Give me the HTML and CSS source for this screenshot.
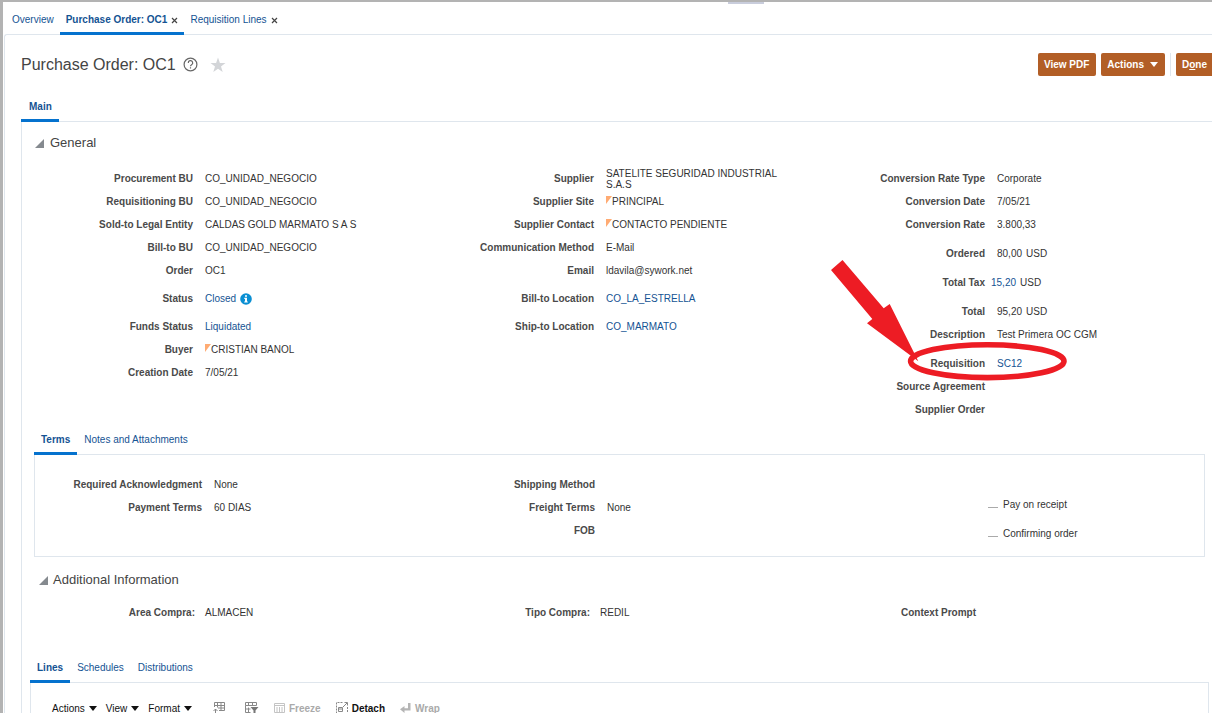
FILE: index.html
```html
<!DOCTYPE html>
<html lang="en">
<head>
    <meta charset="UTF-8">
    <meta name="viewport" content="width=device-width, initial-scale=1.0">
    <title>Purchase Order: OC1</title>
    <link rel="stylesheet" href="styles.css">
</head>
<body>

    <div class="splitter-handle"></div>

    <nav class="tabs top-tabs">
        <div class="tab"><a href="#overview">Overview</a></div>
        <div class="tab active">
            <a href="#order">Purchase Order: OC1</a>
            <button type="button" class="close" aria-label="Close Purchase Order">
                <svg width="7" height="8" viewBox="0 0 7 8"><path d="M1 2l5 5M6 2l-5 5"/></svg>
            </button>
        </div>
        <div class="tab">
            <a href="#requisition-lines">Requisition Lines</a>
            <button type="button" class="close" aria-label="Close Requisition Lines">
                <svg width="7" height="8" viewBox="0 0 7 8"><path d="M1 2l5 5M6 2l-5 5"/></svg>
            </button>
        </div>
    </nav>

    <main class="page">
        <header class="page-header">
            <h1>Purchase Order: OC1</h1>
            <button type="button" class="icon-button" aria-label="Help">
                <svg width="15" height="15" viewBox="0 0 15 15" fill="none" stroke="#666" stroke-width="1.2">
                    <circle cx="7.5" cy="7.5" r="6.4"/>
                    <path d="M5.3 6a2.2 2.2 0 1 1 3.3 1.7c-.8.5-1.1.8-1.1 1.6M7.5 10.3v1.3"/>
                </svg>
            </button>
            <button type="button" class="icon-button star" aria-label="Add to favorites">
                <svg width="16" height="16" viewBox="0 0 16 16">
                    <path d="M8 .5l1.9 5.4 5.6.1-4.5 3.5 1.7 5.5L8 11.7 3.3 15 5 9.5.5 6l5.6-.1z" fill="#d3d5d8"/>
                </svg>
            </button>
            <div class="page-actions">
                <button type="button" class="btn">View PDF</button>
                <button type="button" class="btn">Actions <span class="caret"></span></button>
                <span class="divider"></span>
                <button type="button" class="btn btn-edge"><span>D<u>o</u>ne</span></button>
            </div>
        </header>

        <nav class="tabs main-tabs">
            <div class="tab active"><a href="#main">Main</a></div>
        </nav>

        <div class="main-panel">
            <h2><span class="disclosure"></span>General</h2>

            <div class="columns general">
                <dl>
                    <div class="row"><dt>Procurement BU</dt><dd>CO_UNIDAD_NEGOCIO</dd></div>
                    <div class="row"><dt>Requisitioning BU</dt><dd>CO_UNIDAD_NEGOCIO</dd></div>
                    <div class="row"><dt>Sold-to Legal Entity</dt><dd>CALDAS GOLD MARMATO S A S</dd></div>
                    <div class="row"><dt>Bill-to BU</dt><dd>CO_UNIDAD_NEGOCIO</dd></div>
                    <div class="row"><dt>Order</dt><dd>OC1</dd></div>
                    <div class="row spaced">
                        <dt>Status</dt>
                        <dd class="with-icon">
                            <a href="#status">Closed</a>
                            <svg width="12" height="12" viewBox="0 0 12 12">
                                <circle cx="6" cy="6" r="5.8" fill="#0a8fd3"/>
                                <path d="M5 2.3h2v1.5H5zM4.3 4.8H7v3.6h.8v1.1H4.2V8.4H5V5.9h-.7z" fill="#fff"/>
                            </svg>
                        </dd>
                    </div>
                    <div class="row spaced"><dt>Funds Status</dt><dd><a href="#funds">Liquidated</a></dd></div>
                    <div class="row"><dt>Buyer</dt><dd class="contact">CRISTIAN BANOL</dd></div>
                    <div class="row"><dt>Creation Date</dt><dd>7/05/21</dd></div>
                </dl>

                <dl>
                    <div class="row"><dt>Supplier</dt><dd class="supplier">SATELITE SEGURIDAD INDUSTRIAL S.A.S</dd></div>
                    <div class="row"><dt>Supplier Site</dt><dd class="contact">PRINCIPAL</dd></div>
                    <div class="row"><dt>Supplier Contact</dt><dd class="contact">CONTACTO PENDIENTE</dd></div>
                    <div class="row"><dt>Communication Method</dt><dd>E-Mail</dd></div>
                    <div class="row"><dt>Email</dt><dd>ldavila@sywork.net</dd></div>
                    <div class="row spaced"><dt>Bill-to Location</dt><dd><a href="#bill-to">CO_LA_ESTRELLA</a></dd></div>
                    <div class="row spaced"><dt>Ship-to Location</dt><dd><a href="#ship-to">CO_MARMATO</a></dd></div>
                </dl>

                <dl class="amounts">
                    <div class="row"><dt>Conversion Rate Type</dt><dd>Corporate</dd></div>
                    <div class="row"><dt>Conversion Date</dt><dd>7/05/21</dd></div>
                    <div class="row"><dt>Conversion Rate</dt><dd>3.800,33</dd></div>
                    <div class="row spaced"><dt>Ordered</dt><dd class="money"><span>80,00</span><span>USD</span></dd></div>
                    <div class="row spaced tax"><dt>Total Tax</dt><dd class="money"><a href="#tax">15,20</a><span>USD</span></dd></div>
                    <div class="row spaced"><dt>Total</dt><dd class="money"><span>95,20</span><span>USD</span></dd></div>
                    <div class="row"><dt>Description</dt><dd>Test Primera OC CGM</dd></div>
                    <div class="row spaced marked">
                        <dt>Requisition</dt>
                        <dd><a href="#sc12">SC12</a></dd>
                        <!-- arrow and ring that point out the requisition -->
                        <svg class="callout" width="240" height="126" viewBox="0 0 240 126">
                            <path d="M1 13L12.5 3l41.2 48.3 6-4.3 28.6 57.3L37 66.3l5.3-4.3z" fill="#ed1c24"/>
                            <ellipse cx="157.3" cy="104.2" rx="76.7" ry="16.4" fill="none" stroke="#ed1c24" stroke-width="5.6"/>
                        </svg>
                    </div>
                    <div class="row"><dt>Source Agreement</dt><dd></dd></div>
                    <div class="row"><dt>Supplier Order</dt><dd></dd></div>
                </dl>
            </div>

            <section class="terms">
                <nav class="tabs">
                    <div class="tab active"><a href="#terms">Terms</a></div>
                    <div class="tab"><a href="#notes">Notes and Attachments</a></div>
                </nav>
                <div class="columns terms-panel">
                    <dl>
                        <div class="row"><dt>Required Acknowledgment</dt><dd>None</dd></div>
                        <div class="row"><dt>Payment Terms</dt><dd>60 DIAS</dd></div>
                    </dl>
                    <dl>
                        <div class="row"><dt>Shipping Method</dt><dd></dd></div>
                        <div class="row"><dt>Freight Terms</dt><dd>None</dd></div>
                        <div class="row"><dt>FOB</dt><dd></dd></div>
                    </dl>
                    <div class="checks">
                        <div class="check">
                            <input type="checkbox" id="pay_on_receipt" disabled>
                            <label for="pay_on_receipt">Pay on receipt</label>
                        </div>
                        <div class="check">
                            <input type="checkbox" id="confirming_order" disabled>
                            <label for="confirming_order">Confirming order</label>
                        </div>
                    </div>
                </div>
            </section>

            <h2 class="additional-title"><span class="disclosure"></span>Additional Information</h2>

            <div class="columns additional">
                <dl><div class="row"><dt>Area Compra:</dt><dd>ALMACEN</dd></div></dl>
                <dl><div class="row"><dt>Tipo Compra:</dt><dd>REDIL</dd></div></dl>
                <dl><div class="row"><dt>Context Prompt</dt><dd></dd></div></dl>
            </div>

            <section class="lines">
                <nav class="tabs">
                    <div class="tab active"><a href="#lines">Lines</a></div>
                    <div class="tab"><a href="#schedules">Schedules</a></div>
                    <div class="tab"><a href="#distributions">Distributions</a></div>
                </nav>
                <div class="toolbar">
                    <div class="menus">
                        <button type="button">Actions <span class="caret"></span></button>
                        <button type="button">View <span class="caret"></span></button>
                        <button type="button">Format <span class="caret"></span></button>
                    </div>
                    <button type="button" class="tool" aria-label="Export to Excel">
                        <svg width="12" height="12" viewBox="0 0 12 12" fill="none" stroke="#888">
                            <path d="M1.5 5V.5h10v8H6M1.5 3.5h10M4.5.5v5M8 .5v8M5 6h6.5M2.5 12V7M.5 9l2-2 2 2"/>
                        </svg>
                    </button>
                    <button type="button" class="tool filter" aria-label="Query by Example">
                        <svg width="14" height="12" viewBox="0 0 14 12" fill="none" stroke="#888">
                            <path d="M.5.5h11v3H.5zM3.5.5v3M7.5.5v3M.5 3.5v7h5M.5 7h5M3.5 5.5v5"/>
                            <path d="M5.500 5h8l-3 3.500V12L8.500 11V8.500z" fill="#777" stroke="none"/>
                        </svg>
                    </button>
                    <button type="button" class="tool" disabled>
                        <svg width="11" height="10" viewBox="0 0 11 10" fill="none" stroke="#c4c4c4">
                            <path d="M.5.5h10v9H.5zM.5 2.5h10M3 4v5M5.5 4v5M8 4v5"/>
                        </svg>
                        Freeze
                    </button>
                    <button type="button" class="tool">
                        <svg width="12" height="12" viewBox="0 0 12 12" fill="none" stroke="#888">
                            <path d="M.5 11.5V.5h7M11.5 5v6.5H.5" stroke-dasharray="2 1"/>
                            <path d="M2.5 5.5h4v4h-4zM2.5 7h4M7 5l4-4M8.5.5h3v3"/>
                        </svg>
                        Detach
                    </button>
                    <button type="button" class="tool" disabled>
                        <svg width="11" height="10" viewBox="0 0 11 10">
                            <path d="M8 0h2.500v7.5h-6V10L0 6.3 4.5 3v2.200H8z" fill="#b5b5b5"/>
                        </svg>
                        Wrap
                    </button>
                </div>
            </section>
        </div>
    </main>

</body>
</html>
```
FILE: styles.css
```css
* {
    box-sizing: border-box;
}
body {
    position: relative;
    height: 100vh;
    margin: 0;
    overflow: hidden;
    display: flex;
    flex-direction: column;
    border-top: 2px solid #b3b3b3;
    border-left: 3px solid #b3b3b3;
    background-color: #fff;
    color: #333;
    font-family: "Liberation Sans", Arial, sans-serif;
    font-size: 10px;
    line-height: 11px;
}
h1, h2, dl, dd {
    margin: 0;
}
a {
    color: #145393;
    text-decoration: none;
}
button {
    padding: 0;
    border: none;
    background: none;
    color: inherit;
    font: inherit;
    cursor: pointer;
}
svg {
    display: block;
    flex: none;
}

/* small grip in the top edge */
.splitter-handle {
    position: absolute;
    top: 0;
    left: 60%;
    width: 36px;
    height: 2px;
    background-color: #c9cddc;
}

/* tabs */
.tabs {
    display: flex;
    position: relative;
    margin-bottom: -1px;
}
.tab {
    display: flex;
    align-items: center;
    gap: 4px;
    height: 33px;
    padding: 5px 7px 0;
    border-bottom: 3px solid transparent;
}
.tab.active {
    border-bottom-color: #0572ce;
    font-weight: bold;
}
.close svg {
    stroke: #444;
    stroke-width: 1.2;
}
.top-tabs {
    padding-left: 3px;
}
.top-tabs .tab {
    padding-left: 6px;
    padding-right: 6px;
}

/* page header */
.page {
    flex: 1;
    display: flex;
    flex-direction: column;
    margin-left: 1px;
    border-top: 1px solid #dfe6ed;
    border-left: 1px solid #dfe6ed;
    border-top-left-radius: 3px;
    padding: 18px 0 0 16px;
}
.page-header {
    display: flex;
    align-items: center;
    margin-bottom: 13px;
}
h1 {
    font-size: 16px;
    line-height: 20px;
    font-weight: normal;
    color: #444;
}
.icon-button {
    margin-left: 7px;
}
.star {
    margin-left: 12px;
}
.page-actions {
    display: flex;
    gap: 5px;
    margin-left: auto;
}
.btn {
    display: flex;
    align-items: center;
    gap: 6px;
    height: 23px;
    padding: 0 7px 0 6px;
    border-radius: 2px;
    background-color: #b25e26;
    color: #fff;
    font-weight: bold;
}
.btn-edge {
    padding-right: 5px;
    border-radius: 2px 0 0 2px;
}
.caret {
    border: 4px solid transparent;
    border-top: 5px solid currentColor;
    border-bottom: none;
}
.divider {
    width: 1px;
    background-color: #dfe6ed;
}

/* main panel */
.main-tabs .tab {
    padding-left: 8px;
}
.main-panel {
    flex: 1;
    border-top: 1px solid #dfe6ed;
    border-left: 1px solid #dfe6ed;
    padding-top: 13px;
}
h2 {
    display: flex;
    align-items: center;
    gap: 6px;
    margin-left: 13px;
    font-size: 13px;
    line-height: 16px;
    font-weight: normal;
    color: #444;
}
.disclosure {
    border-left: 9px solid transparent;
    border-bottom: 9px solid #858a8f;
}

/* label and value columns */
.columns {
    display: grid;
}
.row {
    display: grid;
    grid-template-columns: 171px 1fr;
    column-gap: 12px;
    align-items: center;
    height: 23px;
}
.spaced {
    margin-top: 5px;
}
.amounts .spaced {
    margin-top: 6px;
}
dt {
    text-align: right;
    font-weight: bold;
    color: #4a4a4a;
}
.general {
    grid-template-columns: 401fr 391fr 398fr;
    margin-top: 16px;
}
.with-icon, .money {
    display: flex;
    align-items: center;
    gap: 4px;
}
.supplier {
    max-width: 180px;
}
.contact {
    display: flex;
}
.contact::before {
    content: "";
    width: 6px;
    height: 8px;
    background-color: #ffab73;
    clip-path: polygon(0 0, 100% 0, 0 100%);
}
.tax {
    column-gap: 6px;
}
.marked {
    position: relative;
}
.callout {
    position: absolute;
    left: 16px;
    top: -95px;
    pointer-events: none;
}

/* terms */
.terms {
    margin: 1px 7px 0 12px;
}
.terms-panel {
    grid-template-columns: 393fr 393fr 383fr;
    padding: 18px 0 11px;
    border: 1px solid #dfe6ed;
}
.terms-panel .row {
    grid-template-columns: 167px 1fr;
}
.checks {
    padding: 20px 0 0 167px;
}
.check {
    display: flex;
    align-items: center;
    gap: 5px;
    height: 23px;
}
.check + .check {
    margin-top: 6px;
}
.check input {
    appearance: none;
    width: 10px;
    height: 6px;
    margin: 0;
    border-bottom: 1px solid #aaa;
}

/* additional information */
.additional-title {
    margin: 15px 0 13px 17px;
    gap: 5px;
}
.additional {
    grid-template-columns: 395fr 386fr 409fr;
}
.additional .row {
    grid-template-columns: 173px 1fr;
    column-gap: 10px;
}

/* lines */
.lines {
    margin: 26px 3px 0 8px;
}
.toolbar {
    display: flex;
    align-items: center;
    gap: 15px;
    height: 60px;
    padding: 18px 0 26px 21px;
    border: 1px solid #dfe6ed;
    color: #111;
}
.menus {
    display: flex;
    gap: 9px;
    margin-right: 6px;
}
.menus button, .tool {
    display: flex;
    align-items: center;
    gap: 4px;
}
.tool {
    font-weight: bold;
}
.tool:disabled {
    color: #aaa;
}
.filter {
    margin-left: 5px;
}
```
